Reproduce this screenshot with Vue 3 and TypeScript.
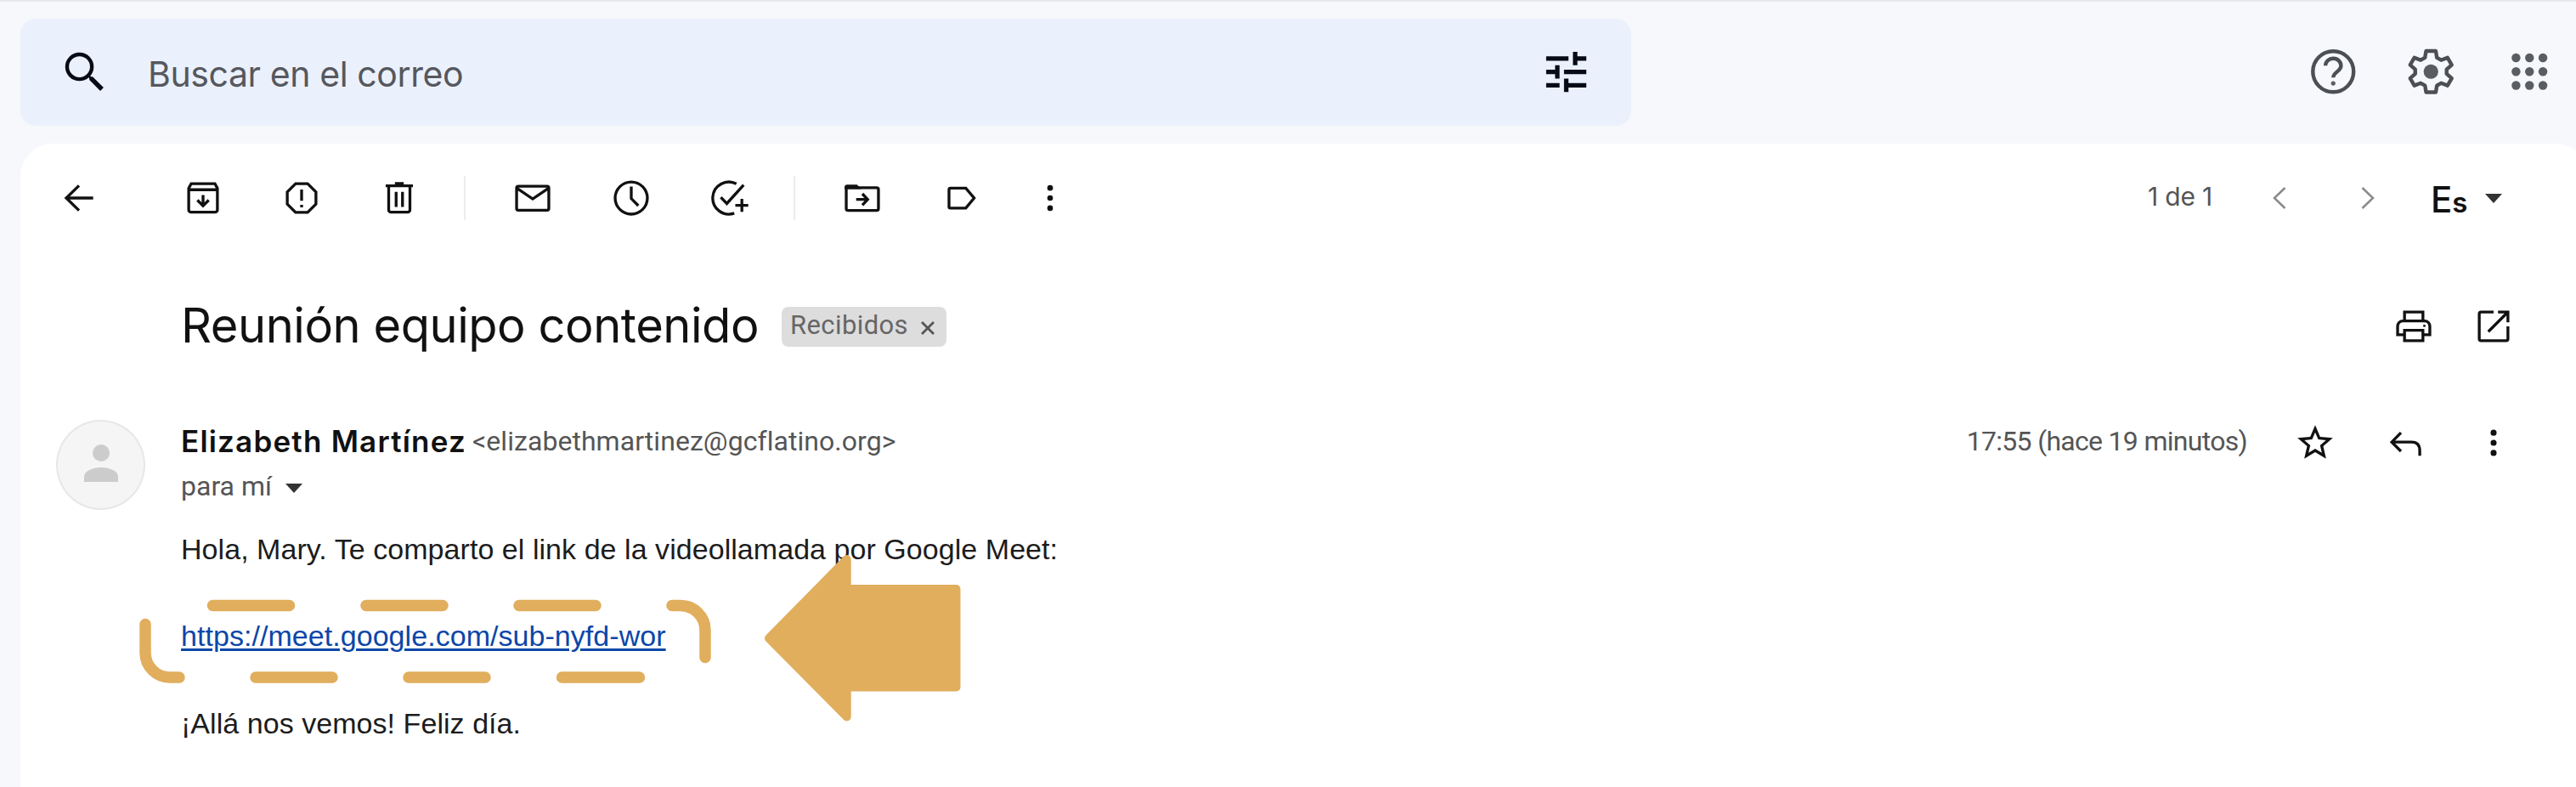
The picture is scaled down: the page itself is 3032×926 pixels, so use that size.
<script setup lang="ts">
interface ToolIcon {
  name: string
  stroke?: string
  fill?: string
}

const archiveTools: ToolIcon[] = [
  { name: 'Archivar', stroke: 'M5.3 3.9h13.4l1.4 2.5v12.3a1.3 1.3 0 0 1-1.3 1.3H5.2a1.3 1.3 0 0 1-1.3-1.3V6.4zM4 7.3h16M12 10.3v5M8.8 13.2l3.2 3.2 3.2-3.2' },
  { name: 'Spam', stroke: 'M8.6 3.9h6.8l4.7 4.7v6.8l-4.7 4.7H8.6l-4.7-4.7V8.6z M12 7.2v6.3M12 15.8v1.5' },
  { name: 'Eliminar', stroke: 'M4.3 5.1h15.4M6 5.4v13.3a1.3 1.3 0 0 0 1.3 1.3h9.4a1.3 1.3 0 0 0 1.3-1.3V5.4M10.2 8.5v8.5M13.8 8.5v8.5', fill: 'M9.5 3h5v2h-5z' },
]

const actionTools: ToolIcon[] = [
  { name: 'No leído', stroke: 'M3.9 5.3h16.2a1 1 0 0 1 1 1v11.6a1 1 0 0 1-1 1H3.900a1 1 0 0 1-1-1V6.300a1 1 0 0 1 1-1zM3.200 6.500L12 12.500l8.800-6' },
  { name: 'Posponer', stroke: 'M21.1 12a9.1 9.1 0 1 1-18.2 0 9.1 9.1 0 0 1 18.2 0zM12 5.500v6.800l4 4' },
  { name: 'Tareas', stroke: 'M16.2 4A9.1 9.1 0 1 0 15 20.600M7.400 11.600l3.400 3.500L20.300 4.600M19.300 12.500v7.300M15.600 16.100h7.300' },
]

const moveTools: ToolIcon[] = [
  { name: 'Mover', stroke: 'M2.9 6.200h17.200a1 1 0 0 1 1 1v10.800a1 1 0 0 1-1 1H3.900a1 1 0 0 1-1-1zM8.500 12.800h5.500M12 9.600l3 3.200-3 3.200', fill: 'M2 6a1.500 1.500 0 0 1 1.500-1.600H9L11.400 7H2z' },
  { name: 'Etiquetas', stroke: 'M5.600 6.400h8.700l4.700 5.600-4.700 5.700H5.600a.8.8 0 0 1-.8-.8V7.200a.8.8 0 0 1 .8-.8z' },
]

const dotAxis = [4.4, 12, 19.6]
</script>

<template>
  <div class="mail-app">
    <header class="header">
      <div class="search">
        <svg class="search-icon" viewBox="0 0 24 24"><path d="M15.5 14h-.79l-.28-.27A6.470 6.470 0 0 0 16 9.500 6.500 6.500 0 1 0 9.500 16c1.610 0 3.090-.59 4.230-1.570l.27.28v.79l5 4.990L20.490 19zm-6 .3a4.800 4.800 0 1 1 0-9.600 4.800 4.800 0 0 1 0 9.600z" /></svg>
        <span class="search-text">Buscar en el correo</span>
        <svg class="tune-icon" viewBox="0 0 24 24"><path d="M3 17v2h6v-2H3zM3 5v2h10V5H3zm10 16v-2h8v-2h-8v-2h-2v6h2zM7 9v2H3v2h4v2h2V9H7zm14 4v-2H11v2h10zm-6-4h2V7h4V5h-4V3h-2v6z" /></svg>
      </div>
      <div class="header-icons">
        <svg viewBox="0 0 24 24">
          <circle cx="12" cy="12" r="9.200" class="line" />
          <path class="line" d="M8.500 9.300a3.500 3.300 0 1 1 7 .1c0 2.400-3.500 2.900-3.500 5.300" />
          <circle cx="12" cy="17.300" r="1" />
        </svg>
        <svg viewBox="0 0 24 24">
          <path class="line" d="M9.800 2.700h4.400l.5 3 1.900 1.100 2.900-1.100 1.900 3.300-2.300 2v2l2.300 2-1.900 3.300-2.900-1.100-1.900 1.100-.5 3H9.800l-.5-3-1.900-1.100-2.900 1.100L2.600 15l2.300-2v-2L2.600 9l1.900-3.300 2.900 1.100 1.900-1.100z" />
          <circle cx="12" cy="12" r="3.300" />
        </svg>
        <svg viewBox="0 0 24 24">
          <template v-for="y in dotAxis" :key="y">
            <circle v-for="x in dotAxis" :key="x" :cx="12 + (x - 12) * 0.8" :cy="12 + (y - 12) * 0.82" r="2" />
          </template>
        </svg>
      </div>
    </header>

    <main class="panel">
      <div class="toolbar">
        <svg class="icon back" viewBox="0 0 24 24"><path class="line" d="M20 12H5M12 5L4.800 12l7.200 7" /></svg>
        <div class="group first">
          <svg v-for="t in archiveTools" :key="t.name" class="icon" viewBox="0 0 24 24"><path class="line" :d="t.stroke" /><path v-if="t.fill" :d="t.fill" /></svg>
        </div>
        <i class="divider"></i>
        <div class="group">
          <svg v-for="t in actionTools" :key="t.name" class="icon" viewBox="0 0 24 24"><path class="line" :d="t.stroke" /><path v-if="t.fill" :d="t.fill" /></svg>
        </div>
        <i class="divider"></i>
        <div class="group moves">
          <svg v-for="t in moveTools" :key="t.name" class="icon" viewBox="0 0 24 24"><path class="line" :d="t.stroke" /><path v-if="t.fill" :d="t.fill" /></svg>
        </div>
        <svg class="icon more" viewBox="0 0 24 24"><circle cx="12" cy="6.300" r="1.600" /><circle cx="12" cy="12" r="1.600" /><circle cx="12" cy="17.700" r="1.600" /></svg>
        <div class="pager">
          <span class="count">1 de 1</span>
          <svg class="chevron" viewBox="0 0 16 26"><path d="M14.500 1L2 13l12.500 12" /></svg>
          <svg class="chevron next" viewBox="0 0 16 26"><path d="M1.500 1L14 13 1.500 25" /></svg>
          <span class="lang">E<small>s</small></span>
          <svg class="caret" viewBox="0 0 20 11"><path d="M0 0h20L10 11z" /></svg>
        </div>
      </div>

      <div class="subject-row">
        <h1>Reunión equipo contenido</h1>
        <span class="chip"><span class="chip-text">Recibidos</span><svg viewBox="0 0 16 16"><path d="M1 1l14 14M15 1L1 15" /></svg></span>
        <div class="subject-icons">
          <svg class="icon" viewBox="0 0 24 24"><path class="line" d="M6.600 16.700H2.900v-4.800a3 3 0 0 1 3-3h12.200a3 3 0 0 1 3 3v4.800h-3.700M6.800 8.900V3.900h10.400v5M6.800 14.200h10.400v5.900H6.800z" /><circle cx="18" cy="11.700" r=".7" /></svg>
          <svg class="icon" viewBox="0 0 24 24"><path class="line" d="M12 3.900H4.900a1 1 0 0 0-1 1v14.200a1 1 0 0 0 1 1h14.200a1 1 0 0 0 1-1V12M14.500 3.900h5.600v5.800M19.800 4.200L9 15" /></svg>
        </div>
      </div>

      <div class="message">
        <div class="avatar">
          <svg viewBox="0 0 40 44"><circle cx="20" cy="10" r="10" /><path d="M0 44v-6c0-7 10-11 20-11s20 4 20 11v6z" /></svg>
        </div>
        <div class="content">
          <div class="sender-row">
            <strong>Elizabeth Martínez</strong>
            <span class="address">&lt;elizabethmartinez@gcflatino.org&gt;</span>
            <span class="time">17:55 (hace 19 minutos)</span>
            <svg class="icon star" viewBox="0 0 24 24"><path d="M22 9.240l-7.190-.62L12 2 9.190 8.630 2 9.240l5.460 4.730L5.820 21 12 17.270 18.180 21l-1.630-7.030zM12 15.400l-3.760 2.270 1-4.280-3.320-2.880 4.380-.38L12 6.100l1.710 4.040 4.380.38-3.320 2.880 1 4.280z" /></svg>
            <svg class="icon reply" viewBox="0 0 24 24"><path class="line" d="M20.200 19.300v-2.800c0-3-1.500-4.900-4.500-4.900H4.800M9.600 6.300l-5.200 5.300 5.200 5.200" /></svg>
            <svg class="icon options" viewBox="0 0 24 24"><circle cx="12" cy="6.300" r="1.700" /><circle cx="12" cy="12" r="1.700" /><circle cx="12" cy="17.700" r="1.700" /></svg>
          </div>
          <div class="recipient">
            <span>para mí</span>
            <svg class="caret" viewBox="0 0 20 11"><path d="M0 0h20L10 11z" /></svg>
          </div>
          <div class="body">
            <p>Hola, Mary. Te comparto el link de la videollamada por Google Meet:</p>
            <p><a href="#">https://meet.google.com/sub-nyfd-wor</a></p>
            <p>¡Allá nos vemos! Feliz día.</p>
          </div>
        </div>
      </div>
    </main>

    <svg class="annotation" viewBox="0 0 980 200">
      <path class="dash" d="M100.500 62.500h90M281 62.500h90M461 62.500h90M641 62.500h10a29 29 0 0 1 29 29v32M151 147h90M331 147h90M511.500 147h91M21 84.500V118a29 29 0 0 0 29 29h11" />
      <path class="arrow" d="M755 101L846.700 8V43H975.500V158.500H846.700V193.500z" />
    </svg>
  </div>
</template>

<style>
body { overflow: hidden; }
</style>

<style scoped>
.mail-app {
  position: relative;
  box-sizing: border-box;
  width: 3032px;
  height: 926px;
  overflow: hidden;
  border-top: 2px solid #e8e8ed;
  background: #f6f8fc;
  color: #111;
  font-family: Inter, Roboto, sans-serif;
  white-space: nowrap;
}
svg { display: block; flex: none; }
.header {
  display: flex;
  align-items: center;
  justify-content: space-between;
  box-sizing: border-box;
  height: 167px;
  padding: 0 24px 2px 24px;
}
.search {
  display: flex;
  align-items: center;
  box-sizing: border-box;
  width: 1896px;
  height: 126px;
  padding: 0 45px;
  border-radius: 18px;
  background: #ebf1fc;
}
.search-icon { width: 62px; height: 62px; fill: #070b16; }
.search-text {
  margin: 4px auto 0 43px;
  font-size: 41px;
  letter-spacing: -0.4px;
  color: #56585e;
}
.tune-icon { width: 63px; height: 63px; fill: #070b16; }
.header-icons { display: flex; gap: 53px; fill: #5a5d62; }
.header-icons svg { width: 62.5px; height: 62.5px; }
.header-icons .line { fill: none; stroke: #4c4f54; stroke-width: 1.7; stroke-linejoin: round; }
.panel {
  box-sizing: border-box;
  width: 3022px;
  height: 790px;
  margin-left: 24px;
  border-radius: 38px;
  background: #fff;
}
.icon { width: 50px; height: 50px; fill: #111; }
.icon .line { fill: none; stroke: #111; stroke-width: 1.6; }
.toolbar {
  display: flex;
  align-items: center;
  height: 128px;
  padding-left: 43.5px;
}
.group { display: flex; gap: 65.6px; margin: 0 51px 0 54px; }
.group.first { margin-left: 96.5px; }
.group.moves { gap: 67px; }
.divider { width: 2px; height: 52px; background: #ececec; }
.more { margin-left: 3px; }
.pager { display: flex; align-items: center; margin: 0 101px 0 auto; }
.count { margin-bottom: 4px; font-size: 30px; letter-spacing: -0.2px; color: #555; }
.chevron { width: 16px; height: 26px; margin-left: 71px; fill: none; stroke: #8a8a8a; stroke-width: 2.5; }
.chevron.next { margin-left: 88px; }
.lang {
  width: 64px;
  margin: 6px 0 0 66px;
  font-size: 42px;
  font-weight: 500;
  line-height: 50px;
}
.lang small { font-size: 33px; font-weight: 600; }
.caret { width: 20px; height: 11px; fill: #333; }
.subject-row {
  display: flex;
  align-items: center;
  height: 174px;
  padding: 0 86px 0 189px;
}
h1 {
  width: 707px;
  margin: 0 0 3px;
  font-size: 56px;
  font-weight: 400;
  line-height: 70px;
  letter-spacing: -0.45px;
  color: #111;
}
.chip {
  display: flex;
  align-items: center;
  box-sizing: border-box;
  width: 194px;
  height: 47px;
  padding: 0 14px 0 10px;
  border-radius: 8px;
  background: #ddd;
}
.chip-text { margin: 0 auto 3px 0; font: 31px Roboto, sans-serif; letter-spacing: 0.4px; color: #666; }
.chip svg { width: 16px; height: 16px; margin-top: 3px; fill: none; stroke: #555; stroke-width: 2.8; }
.subject-icons { display: flex; gap: 44px; margin-left: auto; }
.message { display: flex; align-items: flex-start; padding-left: 42px; }
.avatar {
  display: flex;
  align-items: center;
  justify-content: center;
  box-sizing: border-box;
  width: 105px;
  height: 106px;
  margin: 23px 42px 0 0;
  border: 2px solid #e7e7e7;
  border-radius: 50%;
  background: #f5f5f5;
}
.avatar svg { width: 40px; height: 44px; margin-bottom: 4px; fill: #ccc; }
.content { flex: 1; }
.sender-row {
  display: flex;
  align-items: center;
  height: 60px;
  margin-top: 18px;
  padding-right: 86px;
}
strong { width: 343px; font-size: 35px; font-weight: 600; letter-spacing: 1.2px; }
.address, .time { font: 32px Roboto, sans-serif; color: #555; }
.address { letter-spacing: 0.05px; }
.time { margin-left: auto; letter-spacing: -0.7px; }
.star { margin: 3px 0 0 55px; }
.reply { margin: 3px 0 0 56px; }
.options { margin: 3px 0 0 54px; }
.recipient {
  display: flex;
  align-items: center;
  height: 46px;
  font: 32px Roboto, sans-serif;
  color: #555;
}
.recipient .caret { margin: 4px 0 0 16px; }
.body {
  margin-top: 25.5px;
  font: 34px "Liberation Sans", Arial, sans-serif;
  line-height: 51.4px;
  letter-spacing: 0.05px;
}
.body p { margin: 0 0 51.4px; color: #1c1c1c; }
.body a { color: #0c46a8; text-decoration-thickness: 3px; text-underline-offset: 3px; }
.annotation { position: absolute; left: 150px; top: 648px; width: 980px; height: 200px; overflow: visible; }
.dash { fill: none; stroke: #e0ae5d; stroke-width: 13.5px; stroke-linecap: round; }
.arrow { fill: #e0ae5d; stroke: #e0ae5d; stroke-width: 10px; stroke-linejoin: round; }
</style>
